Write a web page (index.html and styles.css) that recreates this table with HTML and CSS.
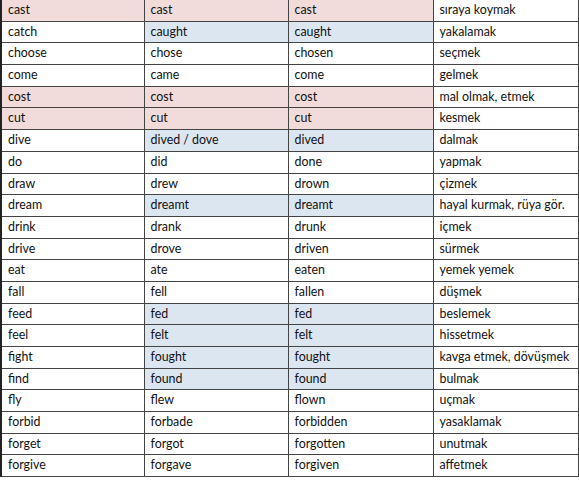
FILE: index.html
```html
<!DOCTYPE html>
<html>
<head>
<meta charset="utf-8">
<link rel="stylesheet" href="styles.css">
</head>
<body>
<table class="verbs">
<colgroup><col class="c1"><col class="c2"><col class="c3"><col class="c4"></colgroup>
<tr><td class="p">cast</td><td class="p">cast</td><td class="p">cast</td><td>sıraya koymak</td></tr>
<tr><td>catch</td><td class="b">caught</td><td class="b">caught</td><td>yakalamak</td></tr>
<tr><td>choose</td><td>chose</td><td>chosen</td><td>seçmek</td></tr>
<tr><td>come</td><td>came</td><td>come</td><td>gelmek</td></tr>
<tr><td class="p">cost</td><td class="p">cost</td><td class="p">cost</td><td>mal olmak, etmek</td></tr>
<tr><td class="p">cut</td><td class="p">cut</td><td class="p">cut</td><td>kesmek</td></tr>
<tr><td>dive</td><td class="b">dived / dove</td><td class="b">dived</td><td>dalmak</td></tr>
<tr><td>do</td><td>did</td><td>done</td><td>yapmak</td></tr>
<tr><td>draw</td><td>drew</td><td>drown</td><td>çizmek</td></tr>
<tr><td>dream</td><td class="b">dreamt</td><td class="b">dreamt</td><td>hayal kurmak, rüya gör.</td></tr>
<tr><td>drink</td><td>drank</td><td>drunk</td><td>içmek</td></tr>
<tr><td>drive</td><td>drove</td><td>driven</td><td>sürmek</td></tr>
<tr><td>eat</td><td>ate</td><td>eaten</td><td>yemek yemek</td></tr>
<tr><td>fall</td><td>fell</td><td>fallen</td><td>düşmek</td></tr>
<tr><td>feed</td><td class="b">fed</td><td class="b">fed</td><td>beslemek</td></tr>
<tr><td>feel</td><td class="b">felt</td><td class="b">felt</td><td>hissetmek</td></tr>
<tr><td>fight</td><td class="b">fought</td><td class="b">fought</td><td>kavga etmek, dövüşmek</td></tr>
<tr><td>find</td><td class="b">found</td><td class="b">found</td><td>bulmak</td></tr>
<tr><td>fly</td><td>flew</td><td>flown</td><td>uçmak</td></tr>
<tr><td>forbid</td><td>forbade</td><td>forbidden</td><td>yasaklamak</td></tr>
<tr><td>forget</td><td>forgot</td><td>forgotten</td><td>unutmak</td></tr>
<tr><td>forgive</td><td>forgave</td><td>forgiven</td><td>affetmek</td></tr>
</table>
</body>
</html>
```
FILE: styles.css
```css
html, body {
  margin: 0;
  padding: 0;
  background: #ffffff;
}
body {
  font-family: Lato, "Open Sans", sans-serif;
  font-size: 12.4px;
  color: #111;
}
.verbs {
  border-collapse: collapse;
  table-layout: fixed;
  width: 577px;
  outline: 2px solid #e2e2e2;
}
.c1 { width: 143px; }
.c2 { width: 144px; }
.c3 { width: 145px; }
.c4 { width: 145px; }
.verbs td {
  border: 1px solid #444;
  height: 20.7px;
  padding: 0 0 0 6px;
  line-height: 20px;
  vertical-align: top;
  white-space: nowrap;
  overflow: hidden;
}
.verbs tr:first-of-type td {
  border-top: none;
}
.verbs td:first-child {
  border-left: 2px solid #222;
}
.verbs td.p {
  background: #f2dcdb;
}
.verbs td.b {
  background: #dce6f1;
}
```
